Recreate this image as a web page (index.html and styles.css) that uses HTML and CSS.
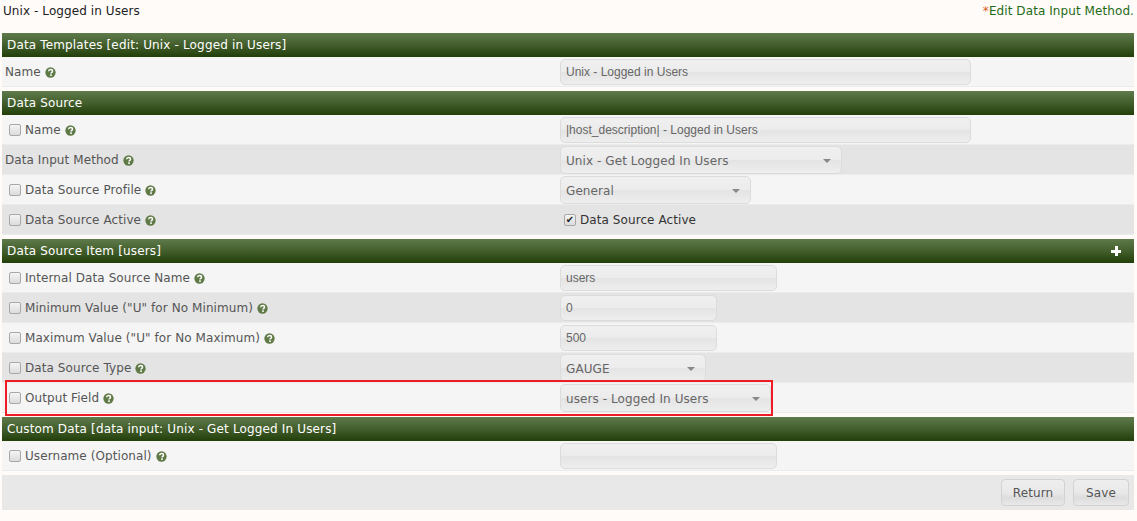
FILE: index.html
```html
<!DOCTYPE html>
<html lang="en">
<head>
<meta charset="utf-8">
<title>Unix - Logged in Users</title>
<link rel="stylesheet" href="styles.css">
</head>
<body>
<svg class="defs" width="0" height="0" aria-hidden="true">
  <symbol id="help" viewBox="0 0 12 12">
    <circle cx="6" cy="6" r="5.6" fill="#5f7a46"/>
    <path d="M3.9 4.7C4 3.4 4.9 2.7 6.1 2.7c1.2 0 2.1.7 2.1 1.8 0 1.4-1.6 1.4-1.6 2.7" fill="none" stroke="#fff" stroke-width="1.6"/>
    <rect x="5.6" y="8" width="1.9" height="1.7" fill="#fff"/>
  </symbol>
</svg>
<header class="top">
  <span class="top-title">Unix - Logged in Users</span>
  <span class="top-link"><span class="star">*</span>Edit Data Input Method.</span>
</header>
<main class="page">
  <section class="panel">
    <h2 class="bar">Data Templates [edit: Unix - Logged in Users]</h2>
    <div class="row">
      <div class="label plain">Name <svg class="help"><use href="#help"/></svg></div>
      <div class="value"><div class="field w-411">Unix - Logged in Users</div></div>
    </div>
  </section>
  <section class="panel">
    <h2 class="bar">Data Source</h2>
    <div class="row">
      <div class="label"><span class="check"></span>Name <svg class="help"><use href="#help"/></svg></div>
      <div class="value"><div class="field w-411">|host_description| - Logged in Users</div></div>
    </div>
    <div class="row alt">
      <div class="label plain">Data Input Method <svg class="help"><use href="#help"/></svg></div>
      <div class="value"><div class="select w-282">Unix - Get Logged In Users<i class="caret"></i></div></div>
    </div>
    <div class="row">
      <div class="label"><span class="check"></span>Data Source Profile <svg class="help"><use href="#help"/></svg></div>
      <div class="value"><div class="select w-191">General<i class="caret"></i></div></div>
    </div>
    <div class="row alt">
      <div class="label"><span class="check"></span>Data Source Active <svg class="help"><use href="#help"/></svg></div>
      <div class="value value-check"><span class="check checked">&#10004;</span><span class="check-text">Data Source Active</span></div>
    </div>
  </section>
  <section class="panel">
    <h2 class="bar bar-plus">Data Source Item [users]<span class="plus"></span></h2>
    <div class="row">
      <div class="label"><span class="check"></span>Internal Data Source Name <svg class="help"><use href="#help"/></svg></div>
      <div class="value"><div class="field w-217">users</div></div>
    </div>
    <div class="row alt">
      <div class="label"><span class="check"></span>Minimum Value ("U" for No Minimum) <svg class="help"><use href="#help"/></svg></div>
      <div class="value"><div class="field w-157">0</div></div>
    </div>
    <div class="row">
      <div class="label"><span class="check"></span>Maximum Value ("U" for No Maximum) <svg class="help"><use href="#help"/></svg></div>
      <div class="value"><div class="field w-157">500</div></div>
    </div>
    <div class="row alt">
      <div class="label"><span class="check"></span>Data Source Type <svg class="help"><use href="#help"/></svg></div>
      <div class="value"><div class="select w-146">GAUGE<i class="caret"></i></div></div>
    </div>
    <div class="row">
      <div class="label"><span class="check"></span>Output Field <svg class="help"><use href="#help"/></svg></div>
      <div class="value"><div class="select w-211">users - Logged In Users<i class="caret"></i></div></div>
    </div>
  </section>
  <section class="panel">
    <h2 class="bar">Custom Data [data input: Unix - Get Logged In Users]</h2>
    <div class="row">
      <div class="label"><span class="check"></span>Username (Optional) <svg class="help"><use href="#help"/></svg></div>
      <div class="value"><div class="field w-217"></div></div>
    </div>
  </section>
  <footer class="actions">
    <button class="btn btn-return" type="button">Return</button>
    <button class="btn btn-save" type="button">Save</button>
  </footer>
</main>
<div class="highlight"></div>
</body>
</html>
```
FILE: styles.css
```css
* { box-sizing: border-box; }
html, body { height: 100%; }
body {
  margin: 0;
  background: #fffbf9;
  font-family: "DejaVu Sans", Verdana, sans-serif;
  font-size: 12px;
  letter-spacing: 0.08px;
  color: #555;
  overflow: hidden;
  position: relative;
}
.defs { position: absolute; }
.top {
  height: 33px;
  padding: 3px 3px 0 3px;
  display: flex;
  justify-content: space-between;
  line-height: 16px;
}
.top-title { color: #222; }
.top-link { color: #1f6b17; }
.star { color: #d9622b; }
.page { margin: 0 3px 0 2px; }
.panel { margin-bottom: 4px; }
.bar {
  margin: 0;
  height: 24px;
  padding: 0 5px;
  line-height: 23px;
  font-size: 12px;
  letter-spacing: 0.15px;
  font-weight: normal;
  color: #fff;
  background: linear-gradient(to bottom, #5f7a4b 0%, #46612f 45%, #223f0a 100%);
  display: flex;
  justify-content: space-between;
  align-items: center;
}
.plus {
  width: 10px;
  height: 10px;
  margin-right: 8px;
  background:
    linear-gradient(#fff, #fff) center / 10px 3px no-repeat,
    linear-gradient(#fff, #fff) center / 3px 10px no-repeat;
}
.row {
  height: 30px;
  display: flex;
  align-items: center;
  background: #f5f5f5;
  box-shadow: inset 0 -1px 0 #ebebeb;
}
.row.alt { background: #e4e4e4; }
.label {
  width: 558px;
  display: flex;
  align-items: center;
  padding-left: 7px;
  color: #555;
}
.label.plain { padding-left: 3px; }
.check {
  width: 12px;
  height: 12px;
  margin-right: 4px;
  border: 1px solid #a8a8a8;
  border-radius: 2px;
  background: linear-gradient(#f4f4f4, #dcdcdc);
  flex: none;
}
.check.checked {
  display: flex;
  align-items: center;
  justify-content: center;
  font-size: 10px;
  line-height: 1;
  color: #222;
  margin-left: 4px;
}
.check-text { color: #333; }
.help { width: 11px; height: 11px; margin-left: 4px; flex: none; }
.value { display: flex; align-items: center; }
.field, .select {
  height: 26px;
  border: 1px solid #dcdcdc;
  border-radius: 5px;
  background: linear-gradient(to bottom, #f0f0f0 0%, #ececec 48%, #e4e4e4 52%, #eeeeee 100%);
  padding-left: 5px;
  line-height: 24px;
  color: #666;
}
.field { font-family: "Liberation Sans", Arial, sans-serif; letter-spacing: 0; }
.select {
  height: 28px;
  padding-top: 1px;
  line-height: 26px;
  position: relative;
}
.caret {
  position: absolute;
  right: 10px;
  top: 12px;
  width: 0;
  height: 0;
  border-left: 4px solid transparent;
  border-right: 4px solid transparent;
  border-top: 4px solid #888;
}
.w-411 { width: 411px; }
.w-282 { width: 282px; }
.w-217 { width: 217px; }
.w-211 { width: 211px; }
.w-191 { width: 191px; }
.w-157 { width: 157px; }
.w-146 { width: 146px; }
.actions {
  height: 35px;
  background: #e8e8e8;
  display: flex;
  justify-content: flex-end;
  align-items: center;
  gap: 8px;
  padding-right: 5px;
}
.btn {
  height: 27px;
  padding: 0;
  border: 1px solid #d2d2d2;
  border-radius: 4px;
  background: linear-gradient(to bottom, #eeeeee 0%, #e9e9e9 50%, #dddddd 70%, #e8e8e8 100%);
  color: #555;
  font-family: "DejaVu Sans", Verdana, sans-serif;
  font-size: 12px;
  letter-spacing: 0.08px;
}
.btn-return { width: 64px; }
.btn-save { width: 56px; }
.highlight {
  position: absolute;
  left: 5px;
  top: 380px;
  width: 768px;
  height: 36px;
  border: 2px solid #ee1c25;
  pointer-events: none;
}
```
